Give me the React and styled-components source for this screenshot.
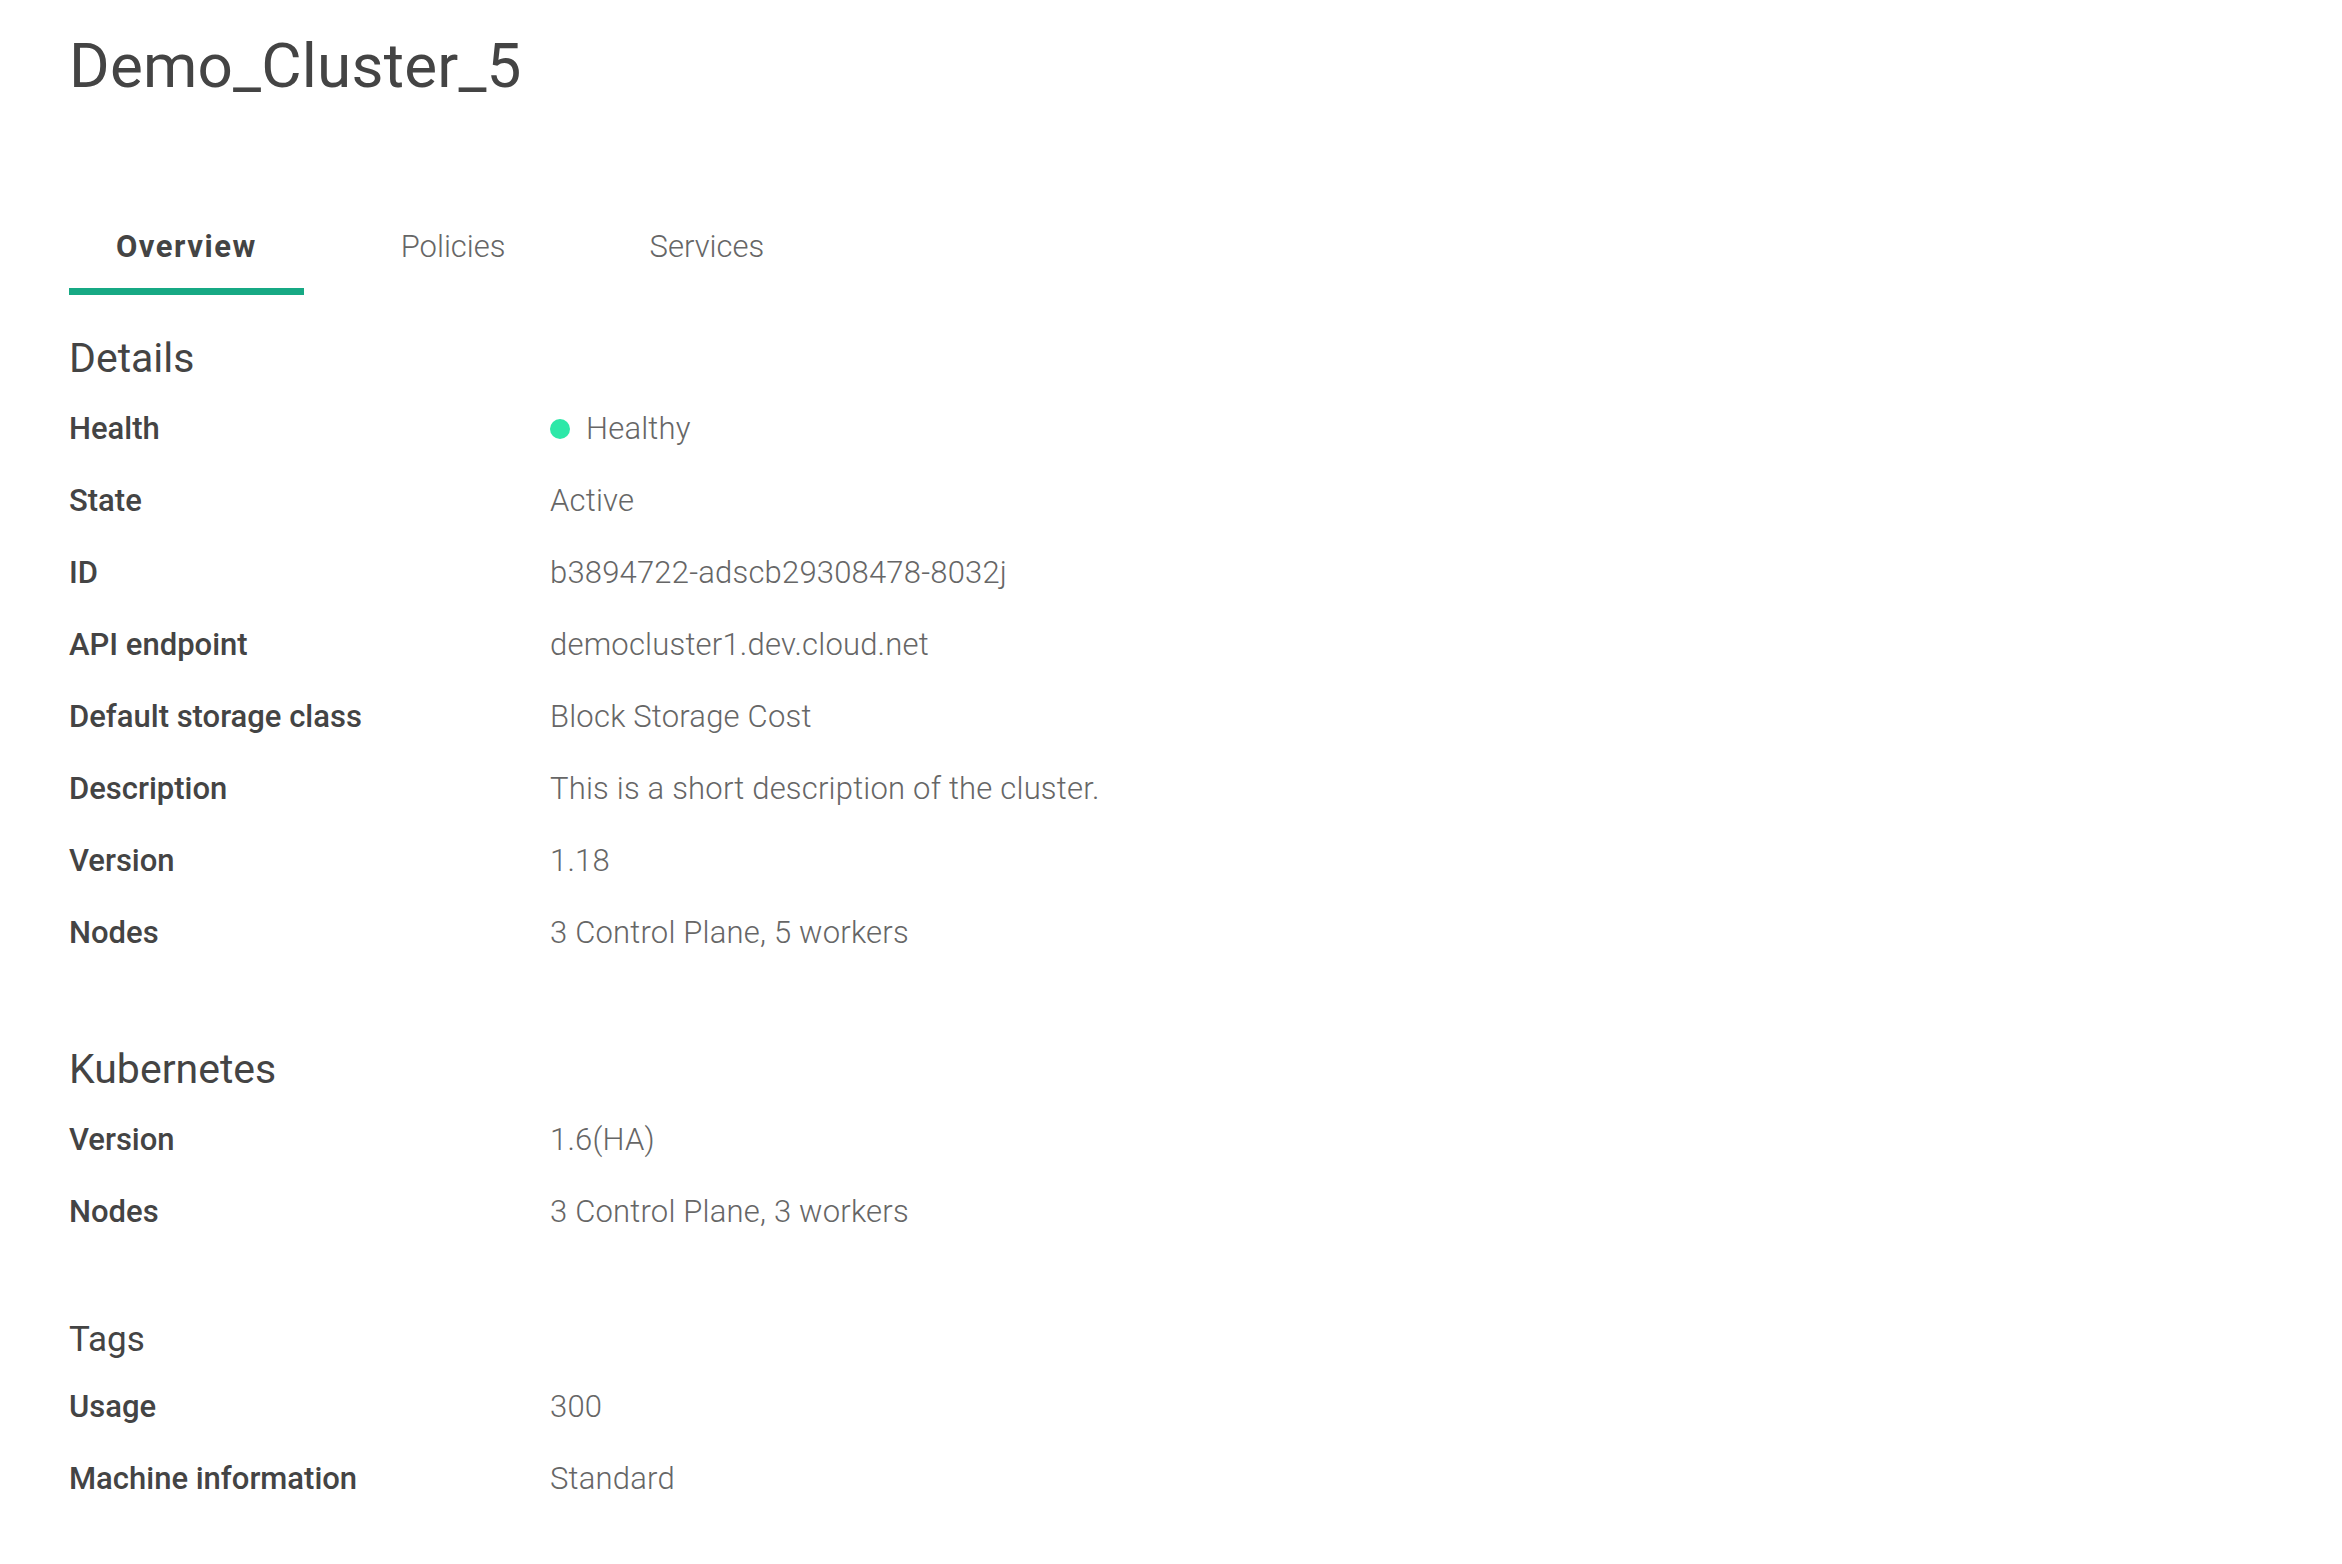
import React from "react";
import styled, { createGlobalStyle } from "styled-components";

const GlobalStyle = createGlobalStyle`
  html, body {
    margin: 0;
    padding: 0;
    background: #ffffff;
  }
  body {
    font-family: "Roboto", "Liberation Sans", sans-serif;
    color: #444444;
  }
`;

const Page = styled.div`
  display: flex;
  flex-direction: column;
  padding: 30px 69px 60px;
  min-height: 1564px;
  box-sizing: border-box;
`;

const Title = styled.h1`
  margin: 0;
  font-size: 62px;
  line-height: 72px;
  font-weight: 400;
  letter-spacing: 0.2px;
  color: #444444;
`;

const TabBar = styled.div`
  display: flex;
  gap: 50px;
  margin-top: 121px;
`;

const Tab = styled.div`
  padding: 0 47px 17px;
  font-size: 31px;
  line-height: 48px;
  font-weight: ${(p) => (p.$active ? 700 : 300)};
  letter-spacing: ${(p) => (p.$active ? "1.5px" : "0")};
  color: ${(p) => (p.$active ? "#444444" : "#666666")};
  border-bottom: 7px solid ${(p) => (p.$active ? "#17a984" : "transparent")};
  cursor: pointer;
`;

const Sections = styled.div`
  display: flex;
  flex-direction: column;
  gap: 72px;
  margin-top: 35px;
`;

const Section = styled.section`
  display: flex;
  flex-direction: column;
`;

const SectionTitle = styled.h2`
  margin: 0 0 ${(p) => (p.$small ? "11px" : "7px")};
  font-size: ${(p) => (p.$small ? "35px" : "41px")};
  line-height: ${(p) => (p.$small ? "40px" : "56px")};
  font-weight: 400;
  color: #444444;
`;

const Row = styled.div`
  display: grid;
  grid-template-columns: 481px 1fr;
  padding: 12px 0;
  font-size: 31px;
  line-height: 48px;
`;

const Label = styled.span`
  font-weight: 500;
  color: #444444;
`;

const Value = styled.span`
  display: flex;
  align-items: center;
  gap: 16px;
  font-weight: 300;
  letter-spacing: 0.2px;
  color: #666666;
`;

const StatusDot = styled.span`
  width: 20px;
  height: 20px;
  border-radius: 50%;
  background: #2de8a8;
  flex-shrink: 0;
`;

const sections = [
  {
    title: "Details",
    rows: [
      { label: "Health", value: "Healthy", status: true },
      { label: "State", value: "Active" },
      { label: "ID", value: "b3894722-adscb29308478-8032j" },
      { label: "API endpoint", value: "democluster1.dev.cloud.net" },
      { label: "Default storage class", value: "Block Storage Cost" },
      { label: "Description", value: "This is a short description of the cluster." },
      { label: "Version", value: "1.18" },
      { label: "Nodes", value: "3 Control Plane, 5 workers" },
    ],
  },
  {
    title: "Kubernetes",
    rows: [
      { label: "Version", value: "1.6(HA)" },
      { label: "Nodes", value: "3 Control Plane, 3 workers" },
    ],
  },
  {
    title: "Tags",
    small: true,
    rows: [
      { label: "Usage", value: "300" },
      { label: "Machine information", value: "Standard" },
    ],
  },
];

const tabs = ["Overview", "Policies", "Services"];

const App = () => {
  return (
    <>
      <GlobalStyle />
      <Page>
        <Title>Demo_Cluster_5</Title>
        <TabBar>
          {tabs.map((t, i) => (
            <Tab key={t} $active={i === 0}>
              {t}
            </Tab>
          ))}
        </TabBar>
        <Sections>
          {sections.map((s) => (
            <Section key={s.title}>
              <SectionTitle $small={s.small}>{s.title}</SectionTitle>
              {s.rows.map((r) => (
                <Row key={r.label}>
                  <Label>{r.label}</Label>
                  <Value>
                    {r.status && <StatusDot />}
                    {r.value}
                  </Value>
                </Row>
              ))}
            </Section>
          ))}
        </Sections>
      </Page>
    </>
  );
};

export default App;
